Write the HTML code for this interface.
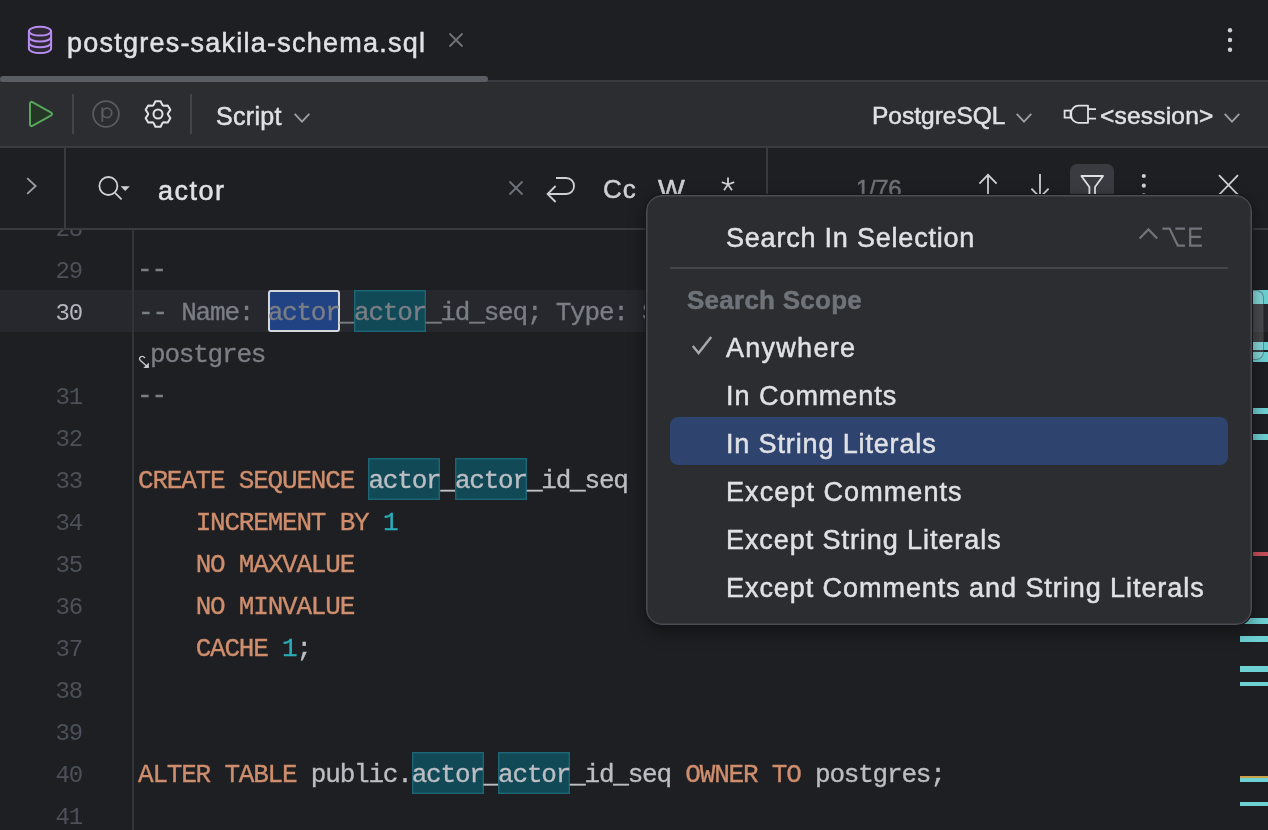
<!DOCTYPE html>
<html>
<head>
<meta charset="utf-8">
<title>postgres-sakila-schema.sql</title>
<style>
*{box-sizing:border-box;margin:0;padding:0}
html,body{width:1268px;height:830px;overflow:hidden;background:#1e1f22}
body{position:relative;font-family:"Liberation Sans",sans-serif;color:#dfe1e5}
.abs{position:absolute}
.t,.mi,.ln,.cl{will-change:transform}
.t{position:absolute;white-space:pre;line-height:1;-webkit-text-stroke:0.5px currentColor}
svg{position:absolute;overflow:visible}

/* tab bar */
#tabbar{left:0;top:0;width:1268px;height:82px;background:#1e1f22}
#tabline{left:0;top:80px;width:1268px;height:2px;background:#393b40}
#tabsel{left:0;top:76px;width:488px;height:6px;background:#5a5d63;border-radius:3px}

/* toolbar */
#toolbar{left:0;top:82px;width:1268px;height:64px;background:#2b2d30}
#toolline{left:0;top:146px;width:1268px;height:2px;background:#393b40}
.vsep{position:absolute;width:2px;background:#43454a}

/* find bar */
#findbar{left:0;top:148px;width:1268px;height:80px;background:#1e1f22}
#findline{left:0;top:228px;width:1268px;height:2px;background:#393b40}

/* editor */
#editor{left:0;top:230px;width:1268px;height:600px;background:#1e1f22;overflow:hidden}
#curline{left:0;top:60px;width:1268px;height:42px;background:#26282e}
#gutterline{left:132px;top:0;width:2px;height:600px;background:#313438}
.ln{position:absolute;left:0;width:82px;text-align:right;height:42px;line-height:47px;
  font-family:"Liberation Mono",monospace;font-size:24px;letter-spacing:-1.2px;color:#4b5059;white-space:pre}
.ln.cur{color:#b4b7be}
.cl{position:absolute;left:138px;height:42px;line-height:46px;
  font-family:"Liberation Mono",monospace;font-size:26px;letter-spacing:-1.2px;color:#bcbec4;white-space:pre;-webkit-text-stroke:0.35px currentColor}
.k{color:#cf8e6d}
.n{color:#2aacb8}
.c{color:#7a7e85}
.h{background:#114957;box-shadow:inset 0 0 0 1.5px #1b6575;display:inline-block;height:42px;vertical-align:top}
.hs{background:#214283;box-shadow:inset 0 0 0 2px #d3d6dd;border-radius:3px;display:inline-block;height:42px;vertical-align:top}

/* stripe */
.mk{position:absolute;background:#6ed1d3;left:1240px;width:28px}

/* popup */
#popup{left:646px;top:195px;width:606px;height:430px;background:#2b2d30;border:1px solid #4b4d53;border-radius:16px;
  box-shadow:inset 0 0 0 0.5px #4b4d53, 0 0 0 1px #16171a, 0 6px 18px rgba(0,0,0,.45)}
.mi{position:absolute;left:726px;white-space:pre;font-size:27px;line-height:1;color:#dfe1e5;-webkit-text-stroke:0.5px currentColor}
#hl{left:670px;top:417px;width:558px;height:48px;background:#2e436e;border-radius:8px}
#psep{left:670px;top:267px;width:558px;height:2px;background:#43454a}
</style>
</head>
<body>

<!-- ===== TAB BAR ===== -->
<div id="tabbar" class="abs"></div>
<div id="tabline" class="abs"></div>
<div id="tabsel" class="abs"></div>
<svg style="left:26px;top:24px" width="28" height="32" viewBox="26 24 28 32">
  <path d="M28.9 31.2 V48.6 C28.9 51.5 34 53.9 40 53.9 S51.1 51.5 51.1 48.6 V31.2" fill="#2f2936" stroke="none"/>
  <ellipse cx="40" cy="31.2" rx="11.1" ry="4.4" fill="#2f2936" stroke="#b88cf3" stroke-width="2"/>
  <path d="M28.9 31.2 V48.6 C28.9 51.2 34 53.1 40 53.1 S51.1 51.2 51.1 48.6 V31.2" fill="none" stroke="#b88cf3" stroke-width="2"/>
  <path d="M28.9 37 C28.9 39.6 34 41.5 40 41.5 S51.1 39.6 51.1 37" fill="none" stroke="#b88cf3" stroke-width="2"/>
  <path d="M28.9 42.8 C28.9 45.4 34 47.3 40 47.3 S51.1 45.4 51.1 42.8" fill="none" stroke="#b88cf3" stroke-width="2"/>
</svg>
<div class="t" id="tabtitle" style="left:67px;top:30px;font-size:27px;letter-spacing:1.23px">postgres-sakila-schema.sql</div>
<svg style="left:449px;top:33px" width="14" height="14" viewBox="0 0 14 14"><path d="M0.5 0.5 L13.5 13.5 M13.5 0.5 L0.5 13.5" stroke="#6f737a" stroke-width="1.8" fill="none"/></svg>
<svg style="left:1226px;top:26px" width="8" height="28" viewBox="0 0 8 28"><circle cx="4" cy="4.3" r="2.2" fill="#ced0d6"/><circle cx="4" cy="14" r="2.2" fill="#ced0d6"/><circle cx="4" cy="23.8" r="2.2" fill="#ced0d6"/></svg>

<!-- ===== TOOLBAR ===== -->
<div id="toolbar" class="abs"></div>
<div id="toolline" class="abs"></div>
<svg style="left:26px;top:98px" width="30" height="32" viewBox="26 98 30 32">
  <path d="M30 103.5 C30 102.2 31.3 101.5 32.4 102.1 L51.2 112.6 C52.3 113.2 52.3 114.8 51.2 115.4 L32.4 125.9 C31.3 126.5 30 125.8 30 124.5 Z" fill="#253627" stroke="#57a65c" stroke-width="2" stroke-linejoin="round"/>
</svg>
<div class="vsep" style="left:72px;top:94px;height:40px"></div>
<svg style="left:91px;top:99px" width="30" height="30" viewBox="0 0 30 30">
  <circle cx="15" cy="15" r="12.9" fill="none" stroke="#5a5b60" stroke-width="1.8"/>
</svg>
<svg style="left:96px;top:104px" width="20" height="22" viewBox="96 104 20 22"><path d="M102.3 107.4 V121.8" stroke="#5a5b60" stroke-width="1.8" fill="none"/><circle cx="107" cy="112.9" r="4.7" fill="none" stroke="#5a5b60" stroke-width="1.8"/></svg>
<svg style="left:143.9px;top:99.9px" width="28" height="28" viewBox="-14 -14 28 28">
  <path d="M-4.48 -8.83 L-2.58 -12.74 L2.58 -12.74 L4.48 -8.83 L5.40 -8.30 L9.74 -8.61 L12.33 -4.13 L9.89 -0.53 L9.89 0.53 L12.33 4.13 L9.74 8.61 L5.40 8.30 L4.48 8.83 L2.58 12.74 L-2.58 12.74 L-4.48 8.83 L-5.40 8.30 L-9.74 8.61 L-12.33 4.13 L-9.89 0.53 L-9.89 -0.53 L-12.33 -4.13 L-9.74 -8.61 L-5.40 -8.30 Z" fill="none" stroke="#dfe1e5" stroke-width="2" stroke-linejoin="round"/>
  <circle cx="0" cy="0" r="4.5" fill="none" stroke="#dfe1e5" stroke-width="2"/>
</svg>
<div class="vsep" style="left:190px;top:94px;height:40px"></div>
<div class="t" id="script" style="left:216px;top:104px;font-size:25px;letter-spacing:0.3px">Script</div>
<svg style="left:294px;top:113px" width="16" height="10" viewBox="0 0 16 10"><path d="M0.7 0.8 L8 8.6 L15.3 0.8" fill="none" stroke="#9da0a8" stroke-width="1.8"/></svg>

<div class="t" id="pg" style="left:872px;top:104px;font-size:24.5px">PostgreSQL</div>
<svg style="left:1016px;top:113px" width="16" height="10" viewBox="0 0 16 10"><path d="M0.7 0.8 L8 8.6 L15.3 0.8" fill="none" stroke="#9da0a8" stroke-width="1.8"/></svg>
<svg style="left:1062px;top:102px" width="36" height="24" viewBox="1062 102 36 24">
  <rect x="1064.6" y="110.6" width="6" height="7" fill="none" stroke="#dfe1e5" stroke-width="1.8"/>
  <path d="M1088 105.6 H1078.6 A7.4 7.4 0 0 0 1071.2 113 V115.4 A7.4 7.4 0 0 0 1078.6 122.8 H1088 Z" fill="none" stroke="#dfe1e5" stroke-width="1.8" stroke-linejoin="round"/>
  <path d="M1088 109.2 H1096 M1088 118.6 H1096" stroke="#dfe1e5" stroke-width="1.8" fill="none"/>
</svg>
<div class="t" id="sess" style="left:1100px;top:103.6px;font-size:24.5px;letter-spacing:0.2px">&lt;session&gt;</div>
<svg style="left:1224px;top:113px" width="16" height="10" viewBox="0 0 16 10"><path d="M0.7 0.8 L8 8.6 L15.3 0.8" fill="none" stroke="#9da0a8" stroke-width="1.8"/></svg>

<!-- ===== FIND BAR ===== -->
<div id="findbar" class="abs"></div>
<div id="findline" class="abs"></div>
<div class="vsep" style="left:64px;top:148px;height:80px;background:#393b40"></div>
<div class="vsep" style="left:766px;top:148px;height:80px;background:#393b40"></div>
<svg style="left:26px;top:177px" width="12" height="18" viewBox="0 0 12 18"><path d="M1.2 1.2 L9.6 9 L1.2 16.8" fill="none" stroke="#9da0a8" stroke-width="1.8"/></svg>
<svg style="left:96px;top:174px" width="36" height="28" viewBox="96 174 36 28">
  <circle cx="108.4" cy="186" r="9" fill="none" stroke="#ced0d6" stroke-width="1.8"/>
  <path d="M115 192.8 L121.6 199.4" stroke="#ced0d6" stroke-width="1.8" fill="none"/>
  <path d="M120.6 186.2 H129.8 L125.2 191 Z" fill="#ced0d6"/>
</svg>
<div class="t" id="actor" style="left:158px;top:177.5px;font-size:27px;letter-spacing:1.5px">actor</div>
<svg style="left:509px;top:181px" width="14" height="14" viewBox="0 0 14 14"><path d="M0.5 0.5 L13.5 13.5 M13.5 0.5 L0.5 13.5" stroke="#6f737a" stroke-width="1.8" fill="none"/></svg>
<svg style="left:545px;top:175px" width="32" height="28" viewBox="545 175 32 28">
  <path d="M556 178 H566 C571 178 574 181.5 574 186 S571 194 566 194 H548" fill="none" stroke="#ced0d6" stroke-width="1.8"/>
  <path d="M555.6 186 L547.6 194 L555.6 202" fill="none" stroke="#ced0d6" stroke-width="1.8"/>
</svg>
<div class="t" id="cc" style="left:603px;top:176px;font-size:26px;letter-spacing:1px;color:#ced0d6">Cc</div>
<div class="t" id="ww" style="left:658px;top:176px;font-size:26px;color:#ced0d6;transform:scaleX(1.09);transform-origin:0 0">W</div>
<svg style="left:721px;top:177px" width="14" height="15" viewBox="0 0 14 15">
  <path d="M7 0.5 V7.5 M7 7.5 L0.8 5.2 M7 7.5 L13.2 5.2 M7 7.5 L3 13.2 M7 7.5 L11 13.2" stroke="#ced0d6" stroke-width="1.8" fill="none"/>
</svg>
<div class="t" id="cnt" style="left:856px;top:176.5px;font-size:24px;color:#6f737a;letter-spacing:-0.4px">1/76</div>
<svg style="left:977px;top:172px" width="22" height="28" viewBox="977 172 22 28">
  <path d="M988 174.5 V198 M979.4 183.6 L988 174.8 L996.6 183.6" fill="none" stroke="#ced0d6" stroke-width="1.8"/>
</svg>
<svg style="left:1029px;top:172px" width="22" height="28" viewBox="1029 172 22 28">
  <path d="M1040 174 V197.5 M1031.4 188.6 L1040 197.4 L1048.6 188.6" fill="none" stroke="#ced0d6" stroke-width="1.8"/>
</svg>
<div class="abs" style="left:1070px;top:164px;width:44px;height:44px;border-radius:7px;background:#393b40"></div>
<svg style="left:1078px;top:172px" width="28" height="28" viewBox="1078 172 28 28">
  <path d="M1081.4 176 H1103 L1095 187 V199 H1089.4 V187 Z" fill="none" stroke="#dfe1e5" stroke-width="1.8" stroke-linejoin="round"/>
</svg>
<svg style="left:1140px;top:172px" width="8" height="28" viewBox="0 0 8 28"><circle cx="3.8" cy="4" r="2.1" fill="#ced0d6"/><circle cx="3.8" cy="13.7" r="2.1" fill="#ced0d6"/><circle cx="3.8" cy="23.4" r="2.1" fill="#ced0d6"/></svg>
<svg style="left:1218px;top:174px" width="21" height="22" viewBox="0 0 21 22"><path d="M1 1.2 L20 20.8 M20 1.2 L1 20.8" stroke="#ced0d6" stroke-width="1.8" fill="none"/></svg>

<!-- ===== EDITOR ===== -->
<div id="editor" class="abs">
  <div id="curline" class="abs"></div>
  <div id="gutterline" class="abs"></div>
  <div class="ln" style="top:-24px">28</div>
  <div class="ln" style="top:18px">29</div>
  <div class="ln cur" style="top:60px">30</div>
  <div class="ln" style="top:144px">31</div>
  <div class="ln" style="top:186px">32</div>
  <div class="ln" style="top:228px">33</div>
  <div class="ln" style="top:270px">34</div>
  <div class="ln" style="top:312px">35</div>
  <div class="ln" style="top:354px">36</div>
  <div class="ln" style="top:396px">37</div>
  <div class="ln" style="top:438px">38</div>
  <div class="ln" style="top:480px">39</div>
  <div class="ln" style="top:522px">40</div>
  <div class="ln" style="top:564px">41</div>

  <div class="cl c" style="top:17px;left:137px">--</div>
  <div class="cl c" style="top:60px">-- Name: <span class="hs">actor</span>_<span class="h">actor</span>_id_seq; Type: SEQUENCE; Schema: public; Owner:</div>
  <div class="cl c" style="top:102px;left:150px">postgres</div>
  <div class="cl c" style="top:143px;left:137px">--</div>
  <div class="cl" style="top:228px"><span class="k">CREATE SEQUENCE</span> <span class="h">actor</span>_<span class="h">actor</span>_id_seq</div>
  <div class="cl" style="top:270px">    <span class="k">INCREMENT BY</span> <span class="n">1</span></div>
  <div class="cl" style="top:312px">    <span class="k">NO MAXVALUE</span></div>
  <div class="cl" style="top:354px">    <span class="k">NO MINVALUE</span></div>
  <div class="cl" style="top:396px">    <span class="k">CACHE</span> <span class="n">1</span>;</div>
  <div class="cl" style="top:522px"><span class="k">ALTER TABLE</span> public.<span class="h">actor</span>_<span class="h">actor</span>_id_seq <span class="k">OWNER TO</span> postgres;</div>
</div>
<!-- soft wrap arrow -->
<svg style="left:137px;top:354px" width="14" height="16" viewBox="137 354 14 16"><path d="M144.6 357.6 C143.4 355.9 140.8 355.9 139.8 357.6 C139.2 358.7 139.5 359.7 140.4 360.6 L146.6 366" fill="none" stroke="#c6c8ce" stroke-width="1.4" stroke-linecap="round"/><path d="M148.9 362.4 V368 H143.3 Z" fill="#c6c8ce"/></svg>

<!-- ===== ERROR STRIPE ===== -->
<div class="mk" style="top:290px;height:14px"></div>
<div class="mk" style="top:342px;height:8px"></div>
<div class="mk" style="top:352px;height:10px"></div>
<div class="mk" style="top:408px;height:6px"></div>
<div class="mk" style="top:434px;height:6px"></div>
<div class="mk" style="top:552px;height:4px;background:#c94f5b"></div>
<div class="mk" style="top:618px;height:6px"></div>
<div class="mk" style="top:636px;height:6px"></div>
<div class="mk" style="top:666px;height:6px"></div>
<div class="mk" style="top:682px;height:4px"></div>
<div class="mk" style="top:776px;height:2px;background:#c9a24a"></div>
<div class="mk" style="top:778px;height:4px"></div>
<div class="mk" style="top:802px;height:4px"></div>
<div class="abs" style="left:1238px;top:290px;width:26px;height:70px;border-radius:8px;background:rgba(255,255,255,.16);border:1.5px solid rgba(20,30,35,.38)"></div>

<!-- ===== POPUP ===== -->
<div id="popup" class="abs"></div>
<div id="hl" class="abs"></div>
<div id="psep" class="abs"></div>
<div class="mi" id="m0" style="top:225px;letter-spacing:0.79px">Search In Selection</div>
<div class="mi" id="m1" style="left:687px;top:287px;font-size:26px;font-weight:bold;color:#6f737a;letter-spacing:0.25px">Search Scope</div>
<div class="mi" id="m2" style="top:335px;letter-spacing:1.27px">Anywhere</div>
<div class="mi" id="m3" style="top:383px;letter-spacing:0.97px">In Comments</div>
<div class="mi" id="m4" style="top:431px;letter-spacing:0.86px">In String Literals</div>
<div class="mi" id="m5" style="top:479px;letter-spacing:1.07px">Except Comments</div>
<div class="mi" id="m6" style="top:527px;letter-spacing:0.93px">Except String Literals</div>
<div class="mi" id="m7" style="top:575px;letter-spacing:0.94px">Except Comments and String Literals</div>
<svg style="left:690px;top:334px" width="24" height="22" viewBox="690 334 24 22">
  <path d="M692.8 346 L698.6 353 L711.2 337" fill="none" stroke="#a6a9b0" stroke-width="2.4"/>
</svg>
<!-- shortcut ^⌥E -->
<svg style="left:1136px;top:224px" width="70" height="26" viewBox="1136 224 70 26">
  <path d="M1139.6 238.6 L1148.4 229.4 L1157.2 238.6" fill="none" stroke="#6f737a" stroke-width="2.2"/>
  <path d="M1162.4 228.6 H1169.6 L1177.8 245.6 H1185 M1175.4 228.6 H1185" fill="none" stroke="#6f737a" stroke-width="2.2"/>
  <path d="M1202 228.6 H1190.2 V245.6 H1202 M1190.2 236.8 H1200.8" fill="none" stroke="#6f737a" stroke-width="2.2"/>
</svg>


</body>
</html>
